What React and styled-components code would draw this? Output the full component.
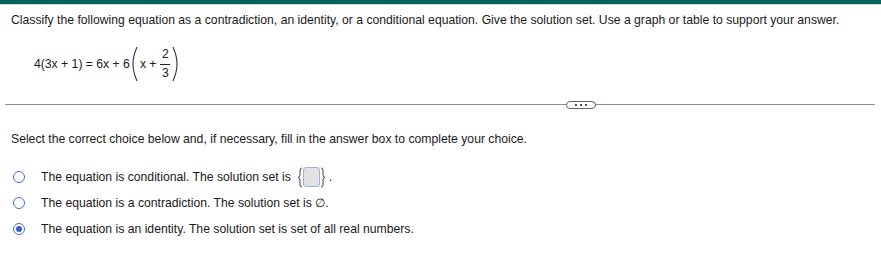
import React from "react";
import styled, { createGlobalStyle } from "styled-components";

const Global = createGlobalStyle`
  html, body { margin: 0; padding: 0; background: #fff; }
  body { font-family: Arial, "Liberation Sans", sans-serif; color: #1a1a1a; }
`;

const Page = styled.div`
  width: 881px;
  height: 257px;
  overflow: hidden;
`;

const TopBar = styled.div`
  height: 4px;
  background: #08645a;
  border-bottom: 1px solid #c9d4dc;
`;

const Question = styled.p`
  margin: 7px 0 0 11px;
  font-size: 12.2px;
  line-height: 16px;
  white-space: nowrap;
`;

const Equation = styled.div`
  display: flex;
  align-items: center;
  margin: 16px 0 0 34px;
  font-size: 12.2px;
  height: 40px;
`;

const Delim = styled.svg`
  display: block;
  flex: none;
  margin: ${(p) => p.$margin || "0"};
`;

const Frac = styled.span`
  display: inline-flex;
  flex-direction: column;
  align-items: center;
  margin-left: 4px;
  line-height: 13px;
  font-size: 12.2px;
`;

const FracBar = styled.span`
  width: 10px;
  border-top: 1px solid #222;
  margin: 3px 0 2px;
`;

const Divider = styled.div`
  position: relative;
  margin: 20px 6px 0 5px;
  height: 1px;
  background: #8a8f99;
`;

const MoreButton = styled.span`
  position: absolute;
  left: 561px;
  top: -3px;
  box-sizing: border-box;
  width: 30px;
  height: 8px;
  border: 1px solid #5c6675;
  border-radius: 4px;
  background: #fff;
  display: flex;
  align-items: center;
  justify-content: center;
  gap: 3px;
`;

const Dot = styled.span`
  width: 2px;
  height: 2px;
  background: #4a5566;
`;

const Prompt = styled.p`
  margin: 26px 0 0 11px;
  font-size: 12.2px;
  line-height: 16px;
`;

const Options = styled.div`
  margin-top: 17px;
  display: flex;
  flex-direction: column;
`;

const Option = styled.label`
  display: flex;
  align-items: center;
  height: ${(p) => p.$h || 26}px;
  padding-left: 13px;
  font-size: 12.2px;
`;

const Radio = styled.span`
  box-sizing: border-box;
  width: 12px;
  height: 12px;
  border-radius: 50%;
  border: 1px solid #4a6cd0;
  display: flex;
  align-items: center;
  justify-content: center;
  margin-right: 16px;
  &::after {
    content: "";
    width: 6px;
    height: 6px;
    border-radius: 50%;
    background: ${(p) => (p.$checked ? "#3a5fcf" : "transparent")};
  }
`;

const AnswerBox = styled.span`
  display: block;
  box-sizing: border-box;
  width: 17px;
  height: 20px;
  background: #e2e2e2;
  border: 1px solid #9db4e2;
  border-radius: 3px;
`;

const LeftParen = () => (
  <Delim width="6" height="36" viewBox="0 0 6 36" $margin="0 2px 0 2px">
    <path d="M5 1 Q1 10 1 18 Q1 26 5 35" fill="none" stroke="#333" strokeWidth="1.1" />
  </Delim>
);

const RightParen = () => (
  <Delim width="6" height="36" viewBox="0 0 6 36" $margin="0 0 0 2px">
    <path d="M1 1 Q5 10 5 18 Q5 26 1 35" fill="none" stroke="#333" strokeWidth="1.1" />
  </Delim>
);

const LeftBrace = () => (
  <Delim width="6" height="21" viewBox="0 0 6 21" $margin="0 0 0 6px">
    <path d="M5 1 Q3 1 3 3 L3 8 Q3 10.5 1 10.5 Q3 10.5 3 13 L3 18 Q3 20 5 20" fill="none" stroke="#444" strokeWidth="1" />
  </Delim>
);

const RightBrace = () => (
  <Delim width="6" height="21" viewBox="0 0 6 21" $margin="0 3px 0 0">
    <path d="M1 1 Q3 1 3 3 L3 8 Q3 10.5 5 10.5 Q3 10.5 3 13 L3 18 Q3 20 1 20" fill="none" stroke="#444" strokeWidth="1" />
  </Delim>
);

export default function App() {
  return (
    <Page>
      <Global />
      <TopBar />
      <Question>
        Classify the following equation as a contradiction, an identity, or a conditional equation. Give the solution set. Use a graph or table to support your answer.
      </Question>
      <Equation>
        <span>4(3x + 1) = 6x + 6</span>
        <LeftParen />
        <span>x +</span>
        <Frac>
          <span>2</span>
          <FracBar />
          <span>3</span>
        </Frac>
        <RightParen />
      </Equation>
      <Divider>
        <MoreButton>
          <Dot />
          <Dot />
          <Dot />
        </MoreButton>
      </Divider>
      <Prompt>Select the correct choice below and, if necessary, fill in the answer box to complete your choice.</Prompt>
      <Options>
        <Option>
          <Radio />
          <span>The equation is conditional. The solution set is</span>
          <LeftBrace />
          <AnswerBox />
          <RightBrace />
          <span>.</span>
        </Option>
        <Option>
          <Radio />
          <span>The equation is a contradiction. The solution set is ∅.</span>
        </Option>
        <Option $h={25}>
          <Radio $checked />
          <span>The equation is an identity. The solution set is set of all real numbers.</span>
        </Option>
      </Options>
    </Page>
  );
}
